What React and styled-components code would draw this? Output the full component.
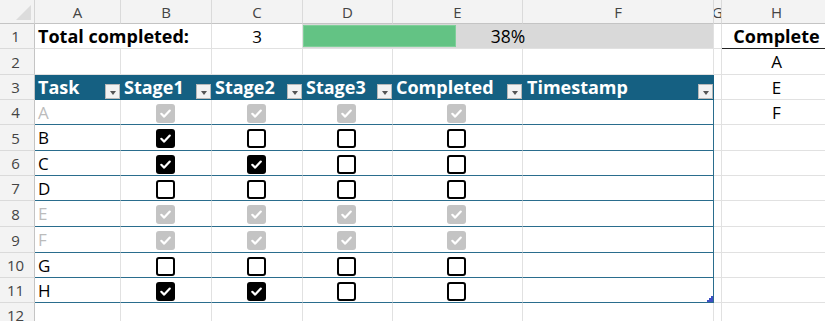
import React from "react";
import styled, { createGlobalStyle } from "styled-components";

const GRID = "#e1e1e1";
const TEAL = "#156082";
const LINE = "#2a6d8d";

const COLS = [35, 86, 91, 91, 90, 130, 191, 8, 110];
const ROWS = [24, 25, 26, 25, 25, 26, 25, 25, 26, 26, 25, 25, 25];
const LETTERS = ["A", "B", "C", "D", "E", "F", "G", "H"];

const tasks = [
  { name: "A", done: true, stages: [1, 1, 1, 1] },
  { name: "B", stages: [1, 0, 0, 0] },
  { name: "C", stages: [1, 1, 0, 0] },
  { name: "D", stages: [0, 0, 0, 0] },
  { name: "E", done: true, stages: [1, 1, 1, 1] },
  { name: "F", done: true, stages: [1, 1, 1, 1] },
  { name: "G", stages: [0, 0, 0, 0] },
  { name: "H", stages: [1, 1, 0, 0] },
];

const completeList = ["A", "E", "F"];
const headers = ["Task", "Stage1", "Stage2", "Stage3", "Completed", "Timestamp"];

const GlobalStyle = createGlobalStyle`
  html, body {
    margin: 0;
    padding: 0;
    background: #fff;
  }
  body {
    font-family: "Open Sans", "Liberation Sans", sans-serif;
    overflow: hidden;
  }
`;

const Sheet = styled.div`
  display: grid;
  grid-template-columns: ${COLS.map((c) => c + "px").join(" ")};
  grid-template-rows: ${ROWS.map((r) => r + "px").join(" ")};
  width: 825px;
  height: 321px;
  overflow: hidden;
`;

const Corner = styled.div`
  box-sizing: border-box;
  background: #f3f3f3;
  border-right: 1px solid #d4d4d4;
  border-bottom: 1px solid #c4c4c4;
  display: flex;
  justify-content: flex-end;
  align-items: flex-end;
  padding: 0 3px 3px 0;
`;

const ColHead = styled.div`
  box-sizing: border-box;
  background: #f3f3f3;
  border-right: 1px solid #dadada;
  border-bottom: 1px solid #c4c4c4;
  display: flex;
  align-items: center;
  justify-content: center;
  font-size: 15px;
  color: #444;
  overflow: hidden;
  min-width: 0;
`;

const RowHead = styled.div`
  box-sizing: border-box;
  background: #f3f3f3;
  border-right: 1px solid #c4c4c4;
  border-bottom: 1px solid #dadada;
  display: flex;
  align-items: center;
  justify-content: center;
  padding-right: 3px;
  font-size: 15px;
  color: #444;
`;

const Cell = styled.div`
  box-sizing: border-box;
  grid-column: span ${(p) => p.$span || 1};
  display: flex;
  align-items: center;
  justify-content: ${(p) => p.$align || "flex-start"};
  padding: ${(p) => p.$pad || "0 3px"};
  border-right: 1px solid ${(p) => p.$right || GRID};
  border-bottom: 1px solid ${(p) => p.$bottom || GRID};
  background: ${(p) => p.$bg || "#fff"};
  color: ${(p) => (p.$muted ? "#bcbcbc" : "#000")};
  font-size: ${(p) => (p.$bold ? "18px" : "17px")};
  font-weight: ${(p) => (p.$bold ? 700 : 400)};
  white-space: nowrap;
  overflow: hidden;
  min-width: 0;
  position: relative;
`;

const HeadCell = styled(Cell)`
  color: #fff;
  background: ${TEAL};
  border-right-color: ${TEAL};
  border-bottom-color: ${TEAL};
  font-size: 18px;
  font-weight: 700;
`;

const FilterButton = styled.div`
  box-sizing: border-box;
  flex: none;
  width: 15px;
  height: 15px;
  margin-left: auto;
  margin-right: -3px;
  align-self: flex-end;
  background: #f2f2f2;
  border: 1px solid #b8b8b8;
  display: flex;
  align-items: center;
  justify-content: center;
  padding-top: 2px;

  &::after {
    content: "";
    border-left: 3.5px solid transparent;
    border-right: 3.5px solid transparent;
    border-top: 4px solid #555;
  }
`;

const BarCell = styled(Cell)`
  display: grid;
  grid-template-columns: minmax(0, 1fr);
  grid-template-rows: minmax(0, 1fr);
  padding: 1px 0;
  background: #d9d9d9;
`;

const Bar = styled.div`
  grid-area: 1 / 1;
  justify-self: start;
  align-self: stretch;
  box-sizing: border-box;
  background: #63c384;
  border: 1px solid #7fcf99;
`;

const BarLabel = styled.div`
  grid-area: 1 / 1;
  display: flex;
  align-items: center;
  justify-content: center;
  font-size: 17.5px;
`;

const Box = styled.div`
  box-sizing: border-box;
  width: 19px;
  height: 19px;
  margin-top: 2px;
  margin-right: 2px;
  border-radius: 3px;
  display: flex;
  align-items: center;
  justify-content: center;
  background: ${(p) => (p.$state === "gray" ? "#c4c4c4" : p.$state === "on" ? "#000" : "#fff")};
  border: ${(p) => (p.$state === "off" ? "2px solid #000" : "none")};
`;

const Handle = styled.svg`
  position: absolute;
  right: 0;
  bottom: 0;
`;

const Check = () => (
  <svg width="13" height="13" viewBox="0 0 13 13">
    <polyline points="2.3,6.8 5.2,9.6 10.8,3.6" fill="none" stroke="#fff" strokeWidth="2.2" strokeLinecap="round" strokeLinejoin="round" />
  </svg>
);

const CheckBox = ({ state }) => <Box $state={state}>{state !== "off" && <Check />}</Box>;

export default function App() {
  const pct = 38;
  const rows = [];

  // row 1
  rows.push(
    <RowHead key="r1">1</RowHead>,
    <Cell key="a1" $span={2} $bold>Total completed:</Cell>,
    <Cell key="c1" $align="center">3</Cell>,
    <BarCell key="d1" $span={3}>
      <Bar style={{ width: `calc(${pct}% - 3px)` }} />
      <BarLabel>{pct}%</BarLabel>
    </BarCell>,
    <Cell key="g1" />,
    <Cell key="h1" $align="center" $bold $bottom="#222" $right="transparent">Complete</Cell>
  );

  // row 2
  rows.push(<RowHead key="r2">2</RowHead>);
  for (let i = 0; i < 7; i++) rows.push(<Cell key={"r2c" + i} />);
  rows.push(<Cell key="h2" $align="center">{completeList[0]}</Cell>);

  // row 3 - table header
  rows.push(<RowHead key="r3">3</RowHead>);
  headers.forEach((h, i) => {
    rows.push(
      <HeadCell key={"h" + i} $pad={i === 5 ? "0 3px 0 4px" : undefined}>
        {h}
        <FilterButton />
      </HeadCell>
    );
  });
  rows.push(<Cell key="g3" />, <Cell key="h3" $align="center">{completeList[1]}</Cell>);

  // table body
  tasks.forEach((t, r) => {
    const n = r + 4;
    rows.push(<RowHead key={"rh" + n}>{n}</RowHead>);
    rows.push(
      <Cell key={"a" + n} $bottom={LINE} $muted={t.done}>{t.name}</Cell>
    );
    t.stages.forEach((s, i) => {
      const state = t.done ? "gray" : s ? "on" : "off";
      rows.push(
        <Cell key={"s" + n + i} $bottom={LINE} $align="center">
          <CheckBox state={state} />
        </Cell>
      );
    });
    rows.push(
      <Cell key={"f" + n} $bottom={LINE} $right={LINE}>
        {n === 11 && (
          <Handle width="6" height="6" viewBox="0 0 6 6">
            <path d="M4 0h2v6H0V4h2V2h2z" fill="#3d4fc4" />
          </Handle>
        )}
      </Cell>
    );
    rows.push(<Cell key={"g" + n} />);
    rows.push(
      <Cell key={"h" + n} $align="center">{n === 4 ? completeList[2] : ""}</Cell>
    );
  });

  // row 12
  rows.push(<RowHead key="r12">12</RowHead>);
  for (let i = 0; i < 8; i++) rows.push(<Cell key={"r12c" + i} />);

  return (
    <>
      <GlobalStyle />
      <Sheet>
        <Corner>
          <svg width="15" height="15" viewBox="0 0 15 15">
            <path d="M15 0V15H0z" fill="#dcdcdc" />
          </svg>
        </Corner>
        {LETTERS.map((l) => (
          <ColHead key={l}>{l}</ColHead>
        ))}
        {rows}
      </Sheet>
    </>
  );
}
